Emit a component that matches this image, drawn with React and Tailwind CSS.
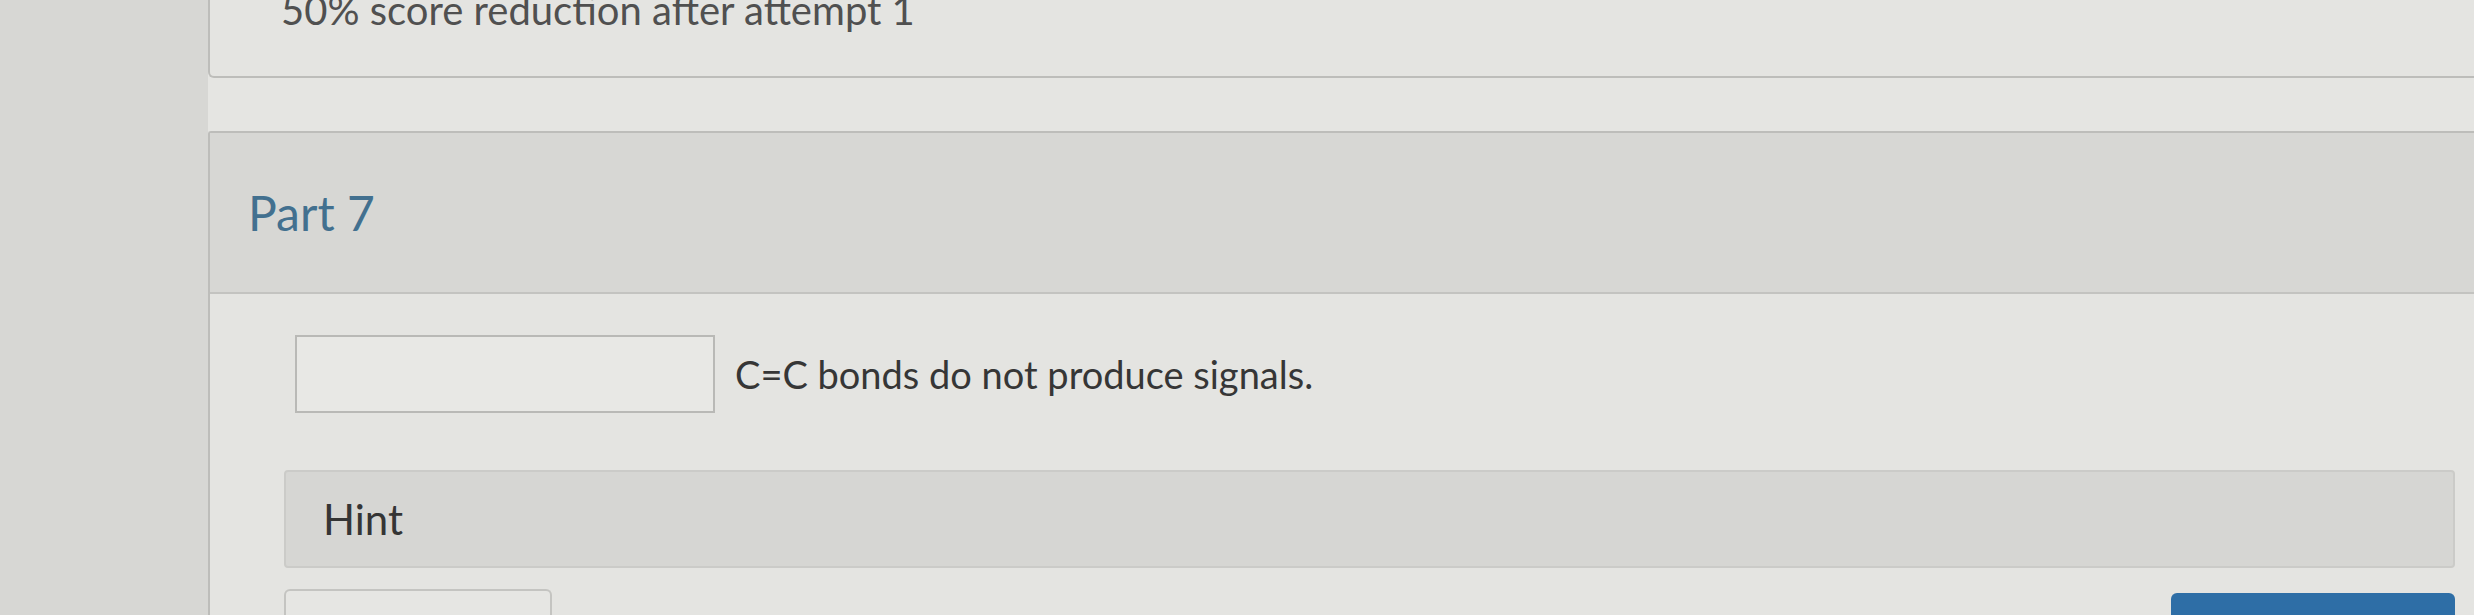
import React from 'react';

const QuestionPart = () => {
  return (
    <div className="rounded-tl-[3px] border-l-2 border-t-2 border-[#bdbdba] bg-[#e4e4e1]">
      {/* Part header */}
      <div className="flex h-[161px] items-center border-b-2 border-[#c3c3c0] bg-[#d7d7d4] pl-[38px]">
        <h2 className="text-[48px] leading-none text-[#42708f]">Part 7</h2>
      </div>

      {/* Answer row */}
      <div className="flex items-center pl-[85px] pt-[41px]">
        <input
          type="text"
          className="h-[78px] w-[420px] border-2 border-[#b9b9b6] bg-[#e8e8e5] outline-none"
        />
        <p className="ml-[20px] text-[38px] leading-none text-[#363636]">
          C=C bonds do not produce signals.
        </p>
      </div>

      {/* Hint */}
      <div className="ml-[74px] mr-[19px] mt-[57px] flex h-[98px] items-center rounded-[4px] border-2 border-[#cbcbc8] bg-[#d6d6d3] pl-[37px]">
        <span className="text-[42px] leading-none text-[#353535]">Hint</span>
      </div>

      {/* Footer controls */}
      <div className="ml-[74px] mr-[19px] mt-[21px] flex items-start justify-between">
        <div className="h-[40px] w-[268px] rounded-t-[6px] border-2 border-b-0 border-[#c4c4c1] bg-[#e6e6e3]" />
        <button className="mt-[4px] h-[40px] w-[284px] rounded-t-[6px] bg-[#2e6ea6]" />
      </div>
    </div>
  );
};

export default function App() {
  return (
    <div className="flex h-[615px] w-[2474px] overflow-hidden bg-[#d7d7d4] font-['Lato','Liberation_Sans',sans-serif]">
      <aside className="w-[208px] shrink-0" />

      <main className="flex flex-1 flex-col bg-[#e5e5e2]">
        {/* Previous part, scrolled mostly out of view */}
        <div className="h-[78px] shrink-0 overflow-hidden rounded-bl-[6px] border-b-2 border-l-2 border-[#bdbdba] bg-[#e4e4e1]">
          <p className="-mt-[13px] pl-[71px] text-[40px] leading-[46px] text-[#505050]">
            50% score reduction after attempt 1
          </p>
        </div>

        <div className="mt-[53px] shrink-0">
          <QuestionPart />
        </div>
      </main>
    </div>
  );
}
